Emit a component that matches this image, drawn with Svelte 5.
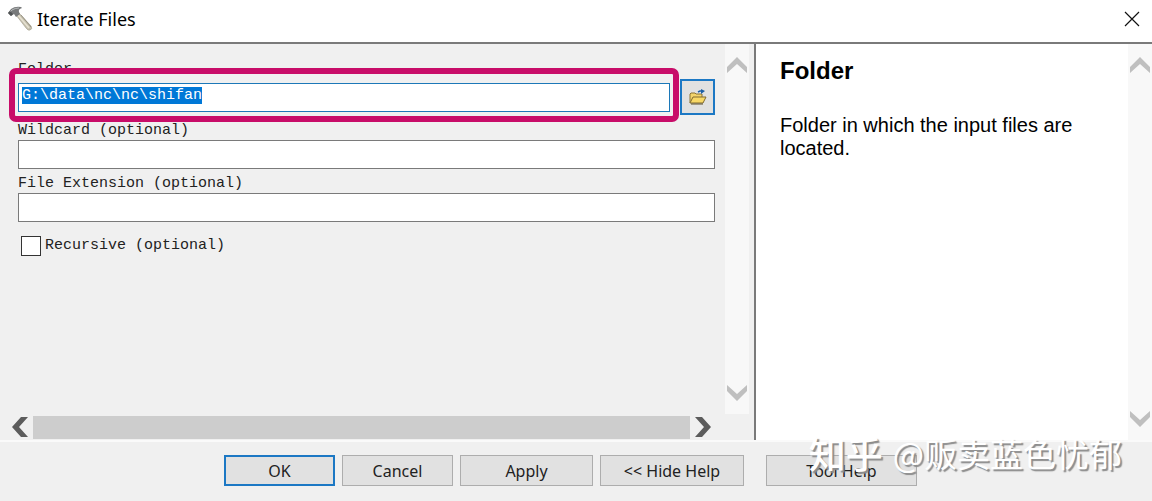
<script>
	import { onMount } from 'svelte';

	let folder = 'G:\\data\\nc\\nc\\shifan';
	let wildcard = '';
	let extension = '';
	let recursive = false;
	let folderInput;

	const buttons = [
		{ label: 'OK', width: 111, primary: true },
		{ label: 'Cancel', width: 111 },
		{ label: 'Apply', width: 133 },
		{ label: '<< Hide Help', width: 144 },
		{ label: 'Tool Help', width: 151, apart: true }
	];

	onMount(() => {
		folderInput.focus();
		folderInput.select();
	});
</script>

<div class="dialog">
	<header>
		<svg class="hammer" viewBox="0 0 26 26" aria-hidden="true">
			<path d="M9 9 L12 7 L24 20 Q26 23 23 24 Q21 25 19 22 Z" fill="#c4bfae" stroke="#a39d8c" stroke-width="0.6" />
			<path d="M11 9 L22 22" stroke="#e6e1d1" stroke-width="1.6" />
			<path d="M14 9 L24 21" stroke="#8f8a7a" stroke-width="0.8" />
			<path d="M1 7 L4 3 Q8 0 14 1 L15 2 Q11 3 12 6 L13 8 L9 11 L7 8 L4 10 Z" fill="#77797a" />
			<path d="M2 7 L5 4 Q8 2 12 2" fill="none" stroke="#b6b9ba" stroke-width="1" />
			<path d="M1 7 L4 10 L6 8 L3 5 Z" fill="#505354" />
		</svg>
		<h1>Iterate Files</h1>
		<button class="close" aria-label="Close">
			<svg viewBox="0 0 16 16"><path d="M1 1 L15 15 M15 1 L1 15" stroke="#111" stroke-width="1.2" /></svg>
		</button>
	</header>

	<main>
		<section class="params">
			<div class="upper">
				<form>
					<div class="field folder">
						<label for="folder">Folder</label>
						<div class="picker">
							<input id="folder" type="text" spellcheck="false" bind:value={folder} bind:this={folderInput} />
							<button type="button" class="browse" aria-label="Browse">
								<svg viewBox="0 0 18 16">
									<path d="M1 14 V5 L2 4 H6 L7 5 H13 V8" fill="#f3d46b" stroke="#8a7335" />
									<path d="M1 14 L4 8 H17 L14 14 Z" fill="#f8d866" stroke="#806a30" />
									<path d="M2 15 H14" stroke="#5f512c" />
									<path d="M9 3 L11 2 H14" fill="none" stroke="#1c5fa5" stroke-width="1.5" />
									<path d="M12 0 L16 2 L12 5 Z" fill="#1c5fa5" />
								</svg>
							</button>
							<div class="marker"></div>
						</div>
					</div>
					<div class="field">
						<label for="wildcard">Wildcard (optional)</label>
						<input id="wildcard" type="text" bind:value={wildcard} />
					</div>
					<div class="field">
						<label for="extension">File Extension (optional)</label>
						<input id="extension" type="text" bind:value={extension} />
					</div>
					<label class="check">
						<input type="checkbox" bind:checked={recursive} />
						Recursive (optional)
					</label>
				</form>
				<div class="vscroll">
					<svg viewBox="0 0 20 16"><path d="M0 10 L10 0 L20 10 V16 L10 7 L0 16 Z" /></svg>
					<svg viewBox="0 0 20 16"><path d="M0 6 L10 16 L20 6 V0 L10 9 L0 0 Z" /></svg>
				</div>
			</div>
			<div class="hscroll">
				<svg viewBox="0 0 16 20"><path d="M9 0 H16 L7 10 L16 20 H9 L0 10 Z" /></svg>
				<div class="thumb"></div>
				<svg viewBox="0 0 16 20"><path d="M7 0 H0 L9 10 L0 20 H7 L16 10 Z" /></svg>
			</div>
		</section>

		<aside>
			<article>
				<h2>Folder</h2>
				<p>Folder in which the input files are located.</p>
			</article>
			<div class="vscroll">
				<svg viewBox="0 0 20 16"><path d="M0 10 L10 0 L20 10 V16 L10 7 L0 16 Z" /></svg>
				<svg viewBox="0 0 20 16"><path d="M0 6 L10 16 L20 6 V0 L10 9 L0 0 Z" /></svg>
			</div>
		</aside>
	</main>

	<footer>
		{#each buttons as b}
			<button class:primary={b.primary} class:apart={b.apart} style="width: {b.width}px">{b.label}</button>
		{/each}
	</footer>

	<div class="watermark"><span class="brand">知乎</span><span>@贩卖蓝色忧郁</span></div>
</div>

<style>
	:global(body) {
		margin: 0;
		background: #f0f0f0;
	}

	.dialog {
		position: relative;
		display: flex;
		flex-direction: column;
		min-height: 100vh;
		background: #f0f0f0;
		color: #222;
		font-family: "Noto Sans", "Open Sans", sans-serif;
		font-size: 16px;
	}

	.dialog * {
		box-sizing: border-box;
	}

	svg {
		display: block;
		flex: none;
	}

	header {
		display: flex;
		align-items: center;
		height: 44px;
		padding: 0 12px 4px 7px;
		background: #fff;
		border-bottom: 2px solid #7a7a7a;
	}

	.hammer {
		width: 26px;
		height: 26px;
	}

	h1 {
		flex: 1;
		margin: 0 0 0 4px;
		font-size: 18px;
		font-weight: 400;
		line-height: 24px;
		color: #000;
	}

	.close {
		padding: 0;
		border: 0;
		background: none;
	}

	.close svg {
		width: 16px;
		height: 16px;
	}

	main {
		display: flex;
		flex: 1;
	}

	.params {
		display: flex;
		flex: 1;
		flex-direction: column;
		padding-right: 5px;
	}

	.upper {
		display: flex;
		flex: 1;
	}

	form {
		flex: 1;
		padding: 15px 10px 0 18px;
		font-family: "Liberation Mono", monospace;
		font-size: 15px;
	}

	.field {
		display: flex;
		flex-direction: column;
		margin-bottom: 4px;
	}

	.field label {
		padding-top: 2px;
		line-height: 18px;
	}

	.field input {
		width: 100%;
		height: 29px;
		padding: 3px 3px 6px;
		border: 1px solid #7a7a7a;
		outline: none;
		background: #fff;
		font: inherit;
		line-height: 18px;
	}

	.picker {
		position: relative;
		display: flex;
		align-items: center;
		gap: 10px;
		height: 36px;
	}

	.folder {
		margin-bottom: 5px;
	}

	.field .picker input {
		flex: 1;
		min-width: 0;
		border-color: #1c78b8;
	}

	.picker input::selection {
		background: #0078d7;
		color: #fff;
	}

	.browse {
		display: flex;
		align-items: center;
		justify-content: center;
		width: 35px;
		height: 36px;
		padding: 0;
		border: 2px solid #1c78c4;
		background: #e1e1e1;
	}

	.browse svg {
		width: 18px;
		height: 16px;
	}

	/* call-out ring around the folder box */
	.marker {
		position: absolute;
		top: -11px;
		right: 36px;
		bottom: -7px;
		left: -9px;
		border: 6px solid #c80d69;
		border-radius: 7px;
		pointer-events: none;
	}

	.check {
		display: flex;
		align-items: center;
		gap: 4px;
		margin: 13px 0 0 3px;
		line-height: 22px;
	}

	.check input {
		appearance: none;
		width: 20px;
		height: 20px;
		margin: 0;
		border: 1px solid #333;
		background: #fff;
	}

	.check input:checked {
		background: #0078d7;
	}

	.vscroll {
		display: flex;
		flex-direction: column;
		align-items: center;
		justify-content: space-between;
		width: 24px;
		padding: 13px 0;
		background: #f8f8f8;
		fill: #bfbfbf;
	}

	.vscroll svg {
		width: 20px;
		height: 16px;
	}

	.hscroll {
		display: flex;
		align-items: center;
		gap: 5px;
		height: 26px;
		padding: 0 38px 0 12px;
		fill: #5c5c5c;
	}

	.hscroll svg {
		width: 16px;
		height: 20px;
	}

	.thumb {
		flex: 1;
		height: 23px;
		background: #cdcdcd;
	}

	aside {
		display: flex;
		width: 35%;
		max-width: 398px;
		border-left: 2px solid #7a7a7a;
		background: #fff;
		color: #000;
		font-family: "Liberation Sans", sans-serif;
	}

	article {
		flex: 1;
		padding: 13px 24px;
	}

	h2 {
		margin: 0 0 29px;
		font-size: 24px;
		line-height: 28px;
	}

	p {
		margin: 0;
		font-size: 20px;
		line-height: 23px;
	}

	footer {
		display: flex;
		gap: 7px;
		height: 61px;
		padding: 13px 12px 15px 224px;
		border-top: 2px solid #fafafa;
		box-sizing: border-box;
	}

	footer button {
		height: 31px;
		padding: 0;
		border: 1px solid #adadad;
		background: #e1e1e1;
		color: #222;
		font: inherit;
	}

	footer .primary {
		border: 2px solid #1c78c4;
	}

	footer .apart {
		margin-left: 15px;
	}

	.watermark {
		position: absolute;
		right: 30px;
		bottom: 24px;
		display: flex;
		align-items: center;
		gap: 10px;
		color: #fff;
		font-family: "Noto Sans CJK SC", sans-serif;
		font-size: 33px;
		line-height: 48px;
		text-shadow: 2px 2px 1px #8c8c8c;
		white-space: nowrap;
		pointer-events: none;
	}

	.brand {
		font-size: 37px;
		font-weight: 500;
	}
</style>
